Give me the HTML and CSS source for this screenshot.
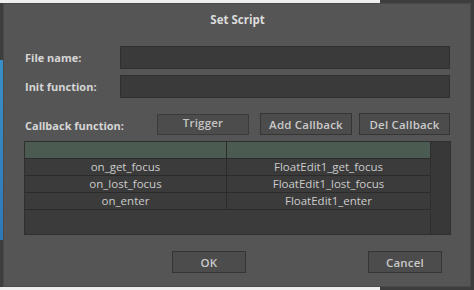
FILE: index.html
```html
<!DOCTYPE html>
<html lang="en">
<head>
    <meta charset="UTF-8">
    <title>Set Script</title>
    <link rel="stylesheet" href="styles.css">
</head>
<body>
    <div class="dialog">
        <div class="title">Set Script</div>

        <div class="field-row">
            <label for="fileName">File name:</label>
            <input type="text" id="fileName">
        </div>
        <div class="field-row">
            <label for="initFunc">Init function:</label>
            <input type="text" id="initFunc">
        </div>

        <div class="callback-row">
            <label>Callback function:</label>
            <button class="btn trigger">Trigger</button>
            <button class="btn add">Add Callback</button>
            <button class="btn del">Del Callback</button>
        </div>

        <div class="table-box">
            <div class="table">
                <div class="cell head"></div>
                <div class="cell head"></div>
                <div class="cell">on_get_focus</div>
                <div class="cell">FloatEdit1_get_focus</div>
                <div class="cell">on_lost_focus</div>
                <div class="cell">FloatEdit1_lost_focus</div>
                <div class="cell">on_enter</div>
                <div class="cell">FloatEdit1_enter</div>
            </div>
            <div class="scroll"></div>
        </div>

        <div class="footer">
            <button class="btn ok">OK</button>
            <button class="btn cancel">Cancel</button>
        </div>
    </div>
</body>
</html>
```

FILE: styles.css
```css
html, body {
    margin: 0;
    height: 290px;
    overflow: hidden;
}

body {
    font-family: "Open Sans", "DejaVu Sans", sans-serif;
    padding: 3px;
    box-sizing: border-box;
    background:
        linear-gradient(#efefef, #efefef) 0 0 / 380px 3px no-repeat,
        linear-gradient(#efefef, #efefef) 0 287px / 380px 3px no-repeat,
        linear-gradient(#3a8fc8, #2f78b8) 0 60px / 3px 180px no-repeat,
        #3d3d3d;
}

.dialog {
    width: 468px;
    height: 284px;
    box-sizing: border-box;
    background: #555555;
    border: 1px solid #4a4a4a;
    padding: 0 20px 0 21px;
    display: flex;
    flex-direction: column;
}

.title {
    text-align: center;
    font-size: 11.5px;
    font-weight: bold;
    color: #dcdcdc;
    line-height: 14px;
    padding-top: 9px;
    margin-bottom: 19px;
}

label {
    font-size: 11px;
    font-weight: bold;
    color: #d6d6d6;
}

.field-row {
    display: flex;
    align-items: center;
    margin-bottom: 6px;
}

.field-row label {
    width: 95px;
}

.field-row input {
    width: 330px;
    height: 23px;
    box-sizing: border-box;
    background: #3a3a3a;
    border: 1px solid #2f2f2f;
    outline: none;
}

.callback-row {
    display: flex;
    align-items: center;
    margin-top: 9px;
    height: 22px;
}

.callback-row label {
    width: 132px;
    padding-top: 2px;
}

.btn {
    font-family: inherit;
    font-size: 11.5px;
    font-weight: 600;
    letter-spacing: 0.2px;
    color: #c9c9c9;
    background: #4c4c4c;
    border: 1px solid #353535;
    height: 22px;
    padding: 0;
    box-sizing: border-box;
}

.trigger { width: 92px; color: #c4c4c4; border-color: #3b3b3b; height: 21px; padding-bottom: 3px; }
.add { width: 92px; margin-left: 11px; }
.del { width: 91px; margin-left: 7px; }

.table-box {
    margin-top: 6px;
    margin-left: -1px;
    width: 427px;
    height: 94px;
    box-sizing: border-box;
    background: #3b3b3b;
    border: 1px solid #2f2f2f;
    display: flex;
}

.table {
    width: 405px;
    display: grid;
    grid-template-columns: 202px 203px;
    align-content: start;
}

.cell {
    font-size: 11.5px;
    color: #cbcbcb;
    text-align: center;
    line-height: 16px;
    border-bottom: 1px solid #2b2b2b;
    box-sizing: border-box;
    height: 17px;
}

.cell:nth-child(odd) {
    border-right: 1px solid #2b2b2b;
}

.cell.head {
    background: #4b5b51;
    height: 17px;
}

.scroll {
    flex: 1;
    background: #383838;
    border-left: 1px solid #2f2f2f;
}

.footer {
    display: flex;
    margin-top: 16px;
}

.ok {
    width: 74px;
    margin-left: 147px;
}

.cancel {
    width: 74px;
    margin-left: 122px;
}
```
